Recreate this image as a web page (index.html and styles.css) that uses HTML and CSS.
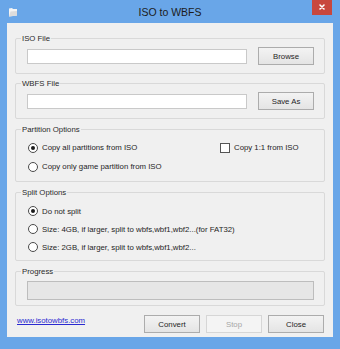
FILE: index.html
```html
<!DOCTYPE html>
<html>
<head>
<meta charset="utf-8">
<link rel="stylesheet" href="styles.css">
</head>
<body>
<div class="window">
  <div class="titlebar">
    <svg class="app-icon" width="10" height="10" viewBox="0 0 10 10">
      <path d="M1 1.5 L4 1 L5 2 L9 2 L9 8.5 L1 9.5 Z" fill="#f4f4f4"/>
      <path d="M1 9.5 L2.5 4.5 L9 4 L9 8.5 Z" fill="#dcdcdc"/>
    </svg>
    <div class="title">ISO to WBFS</div>
    <div class="close">
      <svg width="20" height="15" viewBox="0 0 20 15">
        <path d="M8 5 L12 9 M12 5 L8 9" stroke="#fff" stroke-width="1.6" stroke-linecap="round"/>
      </svg>
    </div>
  </div>
  <div class="client">
    <div class="group g-file">
      <div class="legend">ISO File</div>
      <div class="filerow">
        <div class="textbox"></div>
        <button class="btn">Browse</button>
      </div>
    </div>
    <div class="group g-file g-wbfs">
      <div class="legend">WBFS File</div>
      <div class="filerow">
        <div class="textbox"></div>
        <button class="btn">Save As</button>
      </div>
    </div>
    <div class="group g-part">
      <div class="legend">Partition Options</div>
      <div class="part-grid">
        <div class="opt"><span class="radio checked"></span><span>Copy all partitions from ISO</span></div>
        <div class="opt"><span class="checkbox"></span><span>Copy 1:1 from ISO</span></div>
        <div class="opt"><span class="radio"></span><span>Copy only game partition from ISO</span></div>
      </div>
    </div>
    <div class="group g-split">
      <div class="legend">Split Options</div>
      <div class="split-list">
        <div class="opt"><span class="radio checked"></span><span>Do not split</span></div>
        <div class="opt"><span class="radio"></span><span>Size: 4GB, if larger, split to wbfs,wbf1,wbf2...(for FAT32)</span></div>
        <div class="opt"><span class="radio"></span><span>Size: 2GB, if larger, split to wbfs,wbf1,wbf2...</span></div>
      </div>
    </div>
    <div class="group g-progress">
      <div class="legend">Progress</div>
      <div class="progress"></div>
    </div>
    <div class="bottom">
      <a class="link" href="#">www.isotowbfs.com</a>
      <div class="actions">
        <button class="btn">Convert</button>
        <button class="btn disabled">Stop</button>
        <button class="btn">Close</button>
      </div>
    </div>
  </div>
</div>
</body>
</html>
```

FILE: styles.css
```css
* { box-sizing: border-box; }
html, body { margin: 0; padding: 0; }
body {
  width: 340px;
  height: 349px;
  overflow: hidden;
  font-family: "Liberation Sans", Arial, sans-serif;
  font-size: 7.8px;
  color: #1e1e1e;
}
.window {
  width: 340px;
  height: 349px;
  background: #69a6e8;
  display: flex;
  flex-direction: column;
}
.titlebar {
  height: 23px;
  flex: none;
  display: grid;
  grid-template-columns: 1fr auto 1fr;
  align-items: start;
}
.app-icon {
  margin: 7px 0 0 8px;
  display: block;
}
.title {
  font-size: 10.5px;
  line-height: 13px;
  padding-top: 6px;
  color: #1c1c1c;
}
.close {
  justify-self: end;
  width: 20px;
  height: 15px;
  margin-right: 8px;
  background: #c8473d;
}
.close svg { display: block; }
.client {
  flex: 1;
  margin: 0 7px 12px;
  background: #f0f0f0;
  display: flex;
  flex-direction: column;
  padding: 15px 8px 4px 8px;
}
.group {
  flex: none;
  border: 1px solid #d9d9d9;
  border-radius: 2px;
  display: flex;
  flex-direction: column;
  padding: 0 10px 0 11px;
}
.legend {
  align-self: flex-start;
  margin: -6px 0 0 -6px;
  padding: 0 1px;
  line-height: 12px;
  background: #f0f0f0;
  color: #2a2a2a;
}
.g-file { padding-bottom: 8px; }
.g-wbfs { margin-top: 9px; }
.filerow {
  display: flex;
  align-items: center;
  gap: 11px;
  margin-top: 2px;
}
.textbox {
  flex: 1;
  height: 15px;
  background: #fff;
  border: 1px solid #c9c9c9;
}
.btn {
  width: 56px;
  height: 18px;
  flex: none;
  padding: 0;
  margin: 0;
  font: inherit;
  color: #1e1e1e;
  border: 1px solid #acacac;
  border-radius: 0;
  background: linear-gradient(#f3f3f3, #e4e4e4);
  display: flex;
  align-items: center;
  justify-content: center;
}
.btn.disabled {
  border-color: #d6d6d6;
  background: #f4f4f4;
  color: #a6a6a6;
}
.g-part {
  margin-top: 10px;
  padding-bottom: 5px;
}
.part-grid {
  margin-top: 2px;
  display: grid;
  grid-template-columns: 192px auto;
}
.opt {
  display: flex;
  align-items: center;
  gap: 4px;
  height: 19px;
  padding-left: 1px;
  white-space: nowrap;
}
.radio {
  width: 10px;
  height: 10px;
  border: 1px solid #4a4a4a;
  border-radius: 50%;
  background: #fff;
  display: flex;
  align-items: center;
  justify-content: center;
  flex: none;
}
.radio.checked::after {
  content: "";
  width: 4px;
  height: 4px;
  border-radius: 50%;
  background: #1a1a1a;
}
.checkbox {
  width: 10px;
  height: 10px;
  border: 1px solid #555;
  background: #fff;
  flex: none;
}
.g-split {
  margin-top: 10px;
  padding-bottom: 4px;
}
.split-list { margin-top: 3px; }
.split-list .opt { height: 18px; }
.g-progress {
  margin-top: 10px;
  padding-bottom: 5px;
}
.progress {
  margin-top: 3px;
  height: 19px;
  background: #e6e6e6;
  border: 1px solid #bdbdbd;
}
.bottom {
  margin-top: 9px;
  display: flex;
  justify-content: space-between;
  align-items: flex-start;
  padding: 0 1px 0 2px;
}
.link {
  color: #2a2ad0;
  text-decoration: underline;
  line-height: 12px;
}
.actions {
  display: flex;
  gap: 6px;
}
```
